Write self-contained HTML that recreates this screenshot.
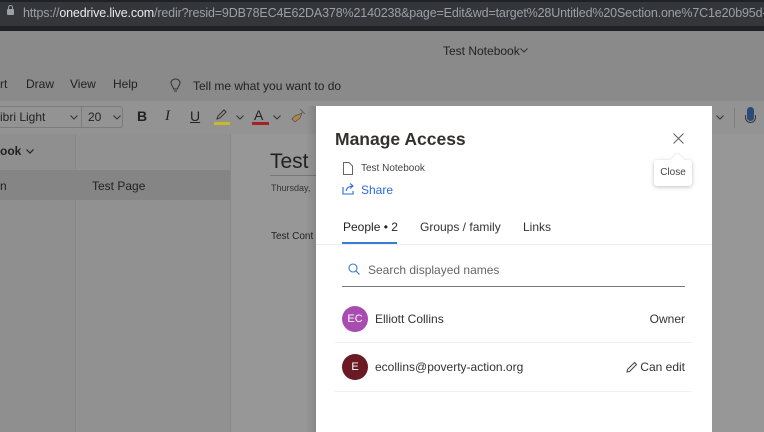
<!DOCTYPE html>
<html><head><meta charset="utf-8"><style>
*{margin:0;padding:0;box-sizing:border-box}
body{width:764px;height:432px;overflow:hidden;position:relative;font-family:"Liberation Sans",sans-serif;background:#8b8b8b}
.a{position:absolute;white-space:nowrap}
</style></head><body>
<div class="a" style="left:0;top:0;width:764px;height:31px;background:#202124"></div>
<div class="a" style="left:0;top:2px;width:764px;height:24px;background:#35363a"></div>
<div class="a" style="left:7px;top:9px;width:7px;height:6px;background:#9aa0a6;border-radius:1px"></div>
<div class="a" style="left:8px;top:5px;width:5px;height:5px;border:1.5px solid #9aa0a6;border-bottom:none;border-radius:3px 3px 0 0"></div>
<div class="a" style="left:23px;top:6px;width:741px;overflow:hidden;font-size:12.5px;color:#9aa0a6;letter-spacing:-0.15px">https://<span style="color:#e8eaed">onedrive.live.com</span>/redir?resid=9DB78EC4E62DA378%2140238&amp;page=Edit&amp;wd=target%28Untitled%20Section.one%7C1e20b95d-03bb-48</div>
<div class="a" style="left:0;top:31px;width:764px;height:70px;background:#8a8a8a"></div>
<div class="a" style="left:443px;top:44px;font-size:12px;color:#222">Test Notebook</div>
<svg class="a" style="left:520px;top:48px" width="8" height="5"><path d="M.5 .5L4 4L7.5 .5" fill="none" stroke="#333"/></svg>
<div class="a" style="left:0;top:77px;font-size:12px;color:#222">rt</div>
<div class="a" style="left:26px;top:77px;font-size:12px;color:#222">Draw</div>
<div class="a" style="left:70px;top:77px;font-size:12px;color:#222">View</div>
<div class="a" style="left:113px;top:77px;font-size:12px;color:#222">Help</div>
<svg class="a" style="left:170px;top:78px" width="11" height="15"><path d="M5.5 1C2.5 1 1 3 1 5C1 7.5 3.5 8.5 3.5 11H7.5C7.5 8.5 10 7.5 10 5C10 3 8.5 1 5.5 1ZM4 13H7" fill="none" stroke="#333" stroke-width="1"/></svg>
<div class="a" style="left:193px;top:79px;font-size:12px;color:#222">Tell me what you want to do</div>
<div class="a" style="left:0;top:101px;width:764px;height:33px;background:#939393"></div>
<div class="a" style="left:0;top:106px;width:123px;height:22px;border:1px solid #7c7c7c;border-left:none;border-radius:0 3px 3px 0"></div>
<div class="a" style="left:81px;top:106px;width:1px;height:22px;background:#7c7c7c"></div>
<div class="a" style="left:0;top:110px;font-size:12px;color:#222">ibri Light</div>
<svg class="a" style="left:70px;top:115px" width="8" height="5"><path d="M.5 .5L4 4L7.5 .5" fill="none" stroke="#333"/></svg>
<div class="a" style="left:88px;top:110px;font-size:12px;color:#222">20</div>
<svg class="a" style="left:113px;top:115px" width="8" height="5"><path d="M.5 .5L4 4L7.5 .5" fill="none" stroke="#333"/></svg>
<div class="a" style="left:137px;top:108px;font-size:14px;font-weight:bold;color:#222">B</div>
<div class="a" style="left:165px;top:108px;font-size:15px;font-style:italic;font-family:'Liberation Serif',serif;color:#222">I</div>
<div class="a" style="left:190px;top:108px;font-size:14px;text-decoration:underline;color:#222">U</div>
<svg class="a" style="left:215px;top:108px" width="14" height="12"><path d="M2 11L3 8L9 2L11 4L5 10Z" fill="none" stroke="#333"/></svg>
<div class="a" style="left:214px;top:122px;width:16px;height:3px;background:#c9b82c"></div>
<svg class="a" style="left:236px;top:115px" width="8" height="5"><path d="M.5 .5L4 4L7.5 .5" fill="none" stroke="#333"/></svg>
<div class="a" style="left:254px;top:107px;font-size:14px;color:#222">A</div>
<div class="a" style="left:252px;top:122px;width:17px;height:3px;background:#a12424"></div>
<svg class="a" style="left:273px;top:115px" width="8" height="5"><path d="M.5 .5L4 4L7.5 .5" fill="none" stroke="#333"/></svg>
<svg class="a" style="left:291px;top:107px" width="16" height="16"><path d="M9 2L14 7M4 9L11 6L9 11L4 15L1 12Z" fill="#b0883e" stroke="#555" stroke-width=".8"/></svg>
<svg class="a" style="left:716px;top:115px" width="8" height="5"><path d="M.5 .5L4 4L7.5 .5" fill="none" stroke="#333"/></svg>
<div class="a" style="left:734px;top:108px;width:1px;height:20px;background:#7c7c7c"></div>
<div class="a" style="left:747px;top:107px;width:7px;height:14px;background:#2b4a7a;border-radius:4px"></div>
<div class="a" style="left:745px;top:115px;width:11px;height:8px;border:1.3px solid #333;border-top:none;border-radius:0 0 6px 6px"></div>
<div class="a" style="left:0;top:134px;width:75px;height:298px;background:#8f8f8f"></div>
<div class="a" style="left:75px;top:134px;width:155px;height:298px;background:#919191;border-left:1px solid #888"></div>
<div class="a" style="left:230px;top:134px;width:534px;height:298px;background:#979797;border-left:1px solid #888"></div>
<div class="a" style="left:0;top:170px;width:230px;height:30px;background:#858585"></div>
<div class="a" style="left:0;top:144px;font-size:12px;font-weight:bold;color:#222">ook</div>
<svg class="a" style="left:26px;top:149px" width="8" height="5"><path d="M.5 .5L4 4L7.5 .5" fill="none" stroke="#222" stroke-width="1.2"/></svg>
<div class="a" style="left:0;top:179px;font-size:12px;color:#222">n</div>
<div class="a" style="left:92px;top:179px;font-size:12px;color:#222">Test Page</div>
<div class="a" style="left:270px;top:150px;font-size:21px;color:#222">Test P</div>
<div class="a" style="left:270px;top:175px;width:60px;height:1px;background:#777"></div>
<div class="a" style="left:271px;top:183px;font-size:9px;color:#333">Thursday,</div>
<div class="a" style="left:271px;top:231px;font-size:10px;color:#222">Test Cont</div>
<div class="a" style="left:306px;top:106px;width:10px;height:326px;background:linear-gradient(to right,rgba(0,0,0,0),rgba(0,0,0,.12))"></div>
<div class="a" style="left:316px;top:106px;width:396px;height:326px;background:#fff"></div>
<div class="a" style="left:335px;top:129px;font-size:17.5px;font-weight:bold;color:#323130">Manage Access</div>
<svg class="a" style="left:673px;top:133px" width="11" height="11"><path d="M.5 .5L10.5 10.5M10.5 .5L.5 10.5" stroke="#666" stroke-width="1.1"/></svg>
<div class="a" style="left:654px;top:160px;width:38px;height:26px;background:#fff;border-radius:3px;box-shadow:0 1px 4px rgba(0,0,0,.25);font-size:10px;color:#444;text-align:center;line-height:26px">Close</div>
<div class="a" style="left:673px;top:155px;width:9px;height:9px;background:#fff;transform:rotate(45deg);box-shadow:-1px -1px 2px rgba(0,0,0,.08)"></div>
<svg class="a" style="left:343px;top:162px" width="10" height="13"><path d="M.5 .5H6L9.5 4V12.5H.5Z" fill="none" stroke="#666"/></svg>
<div class="a" style="left:361px;top:163px;font-size:10px;color:#444">Test Notebook</div>
<svg class="a" style="left:342px;top:183px" width="13" height="12"><path d="M1 4V11H11V8M4 8C5 4 8 3 11 3M8 .5L11 3L8 5.5" fill="none" stroke="#2a6bd6" stroke-width="1.1"/></svg>
<div class="a" style="left:361px;top:183px;font-size:12px;color:#2a6bd6">Share</div>
<div class="a" style="left:343px;top:220px;font-size:12px;color:#222">People • 2</div>
<div class="a" style="left:342px;top:242px;width:55px;height:2px;background:#3a7bd5"></div>
<div class="a" style="left:420px;top:220px;font-size:12px;color:#333">Groups / family</div>
<div class="a" style="left:523px;top:220px;font-size:12px;color:#333">Links</div>
<div class="a" style="left:316px;top:244px;width:396px;height:1px;background:#eee"></div>
<svg class="a" style="left:348px;top:263px" width="12" height="12"><circle cx="5" cy="5" r="4" fill="none" stroke="#3a7bd5" stroke-width="1.1"/><path d="M8 8L11.5 11.5" stroke="#3a7bd5" stroke-width="1.2"/></svg>
<div class="a" style="left:368px;top:263px;font-size:12px;color:#666">Search displayed names</div>
<div class="a" style="left:342px;top:286px;width:343px;height:1px;background:#777"></div>
<div class="a" style="left:342px;top:306px;width:26px;height:26px;border-radius:50%;background:#a94cb0;color:#fff;font-size:11px;text-align:center;line-height:26px">EC</div>
<div class="a" style="left:375px;top:312px;font-size:12px;color:#333">Elliott Collins</div>
<div class="a" style="right:79px;top:312px;font-size:12px;color:#333">Owner</div>
<div class="a" style="left:335px;top:342px;width:357px;height:1px;background:#f0f0f0"></div>
<div class="a" style="left:342px;top:354px;width:26px;height:26px;border-radius:50%;background:#6a1a23;color:#fff;font-size:11px;text-align:center;line-height:26px">E</div>
<div class="a" style="left:375px;top:360px;font-size:12px;color:#333">ecollins@poverty-action.org</div>
<svg class="a" style="left:626px;top:361px" width="12" height="12"><path d="M1 11L1.5 8.5L8.5 1.5L10.5 3.5L3.5 10.5Z" fill="none" stroke="#444"/></svg>
<div class="a" style="right:79px;top:360px;font-size:12px;color:#333">Can edit</div>
<div class="a" style="left:335px;top:391px;width:357px;height:1px;background:#f0f0f0"></div>
</body></html>
